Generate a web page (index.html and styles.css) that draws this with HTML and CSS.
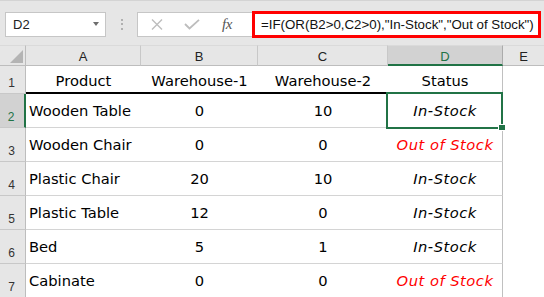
FILE: index.html
```html
<!DOCTYPE html>
<html>
<head>
<meta charset="utf-8">
<link rel="stylesheet" href="styles.css">
</head>
<body>
<div class="toolbar">
  <div class="namebox">
    <span class="name">D2</span>
    <span class="caret"></span>
  </div>
  <div class="dots"><i></i><i></i><i></i></div>
  <div class="buttons">
    <svg class="btn-x" width="12" height="11" viewBox="0 0 12 11"><path d="M1 0.5 L11 10.5 M11 0.5 L1 10.5" stroke="#bdbdbd" stroke-width="1.4" fill="none"/></svg>
    <svg class="btn-ok" width="16" height="11" viewBox="0 0 16 11"><path d="M1 5 L5.5 9.5 L15 0.8" stroke="#bdbdbd" stroke-width="1.8" fill="none"/></svg>
    <span class="fx">fx</span>
  </div>
  <div class="formula">=IF(OR(B2&gt;0,C2&gt;0),"In-Stock","Out of Stock")</div>
</div>
<div class="sheet">
  <div class="grid">
    <div class="corner"><span class="tri"></span></div>
    <div class="ch">A</div>
    <div class="ch">B</div>
    <div class="ch">C</div>
    <div class="ch ch-sel">D</div>
    <div class="ch ch-last">E</div>

    <div class="rh">1</div>
    <div class="c hdr">Product</div>
    <div class="c hdr">Warehouse-1</div>
    <div class="c hdr">Warehouse-2</div>
    <div class="c hdr d">Status</div>
    <div class="e"></div>

    <div class="rh rh-sel">2</div>
    <div class="c left">Wooden Table</div>
    <div class="c">0</div>
    <div class="c">10</div>
    <div class="c d st">In-Stock</div>
    <div class="e"></div>

    <div class="rh">3</div>
    <div class="c left">Wooden Chair</div>
    <div class="c">0</div>
    <div class="c">0</div>
    <div class="c d st out">Out of Stock</div>
    <div class="e"></div>

    <div class="rh">4</div>
    <div class="c left">Plastic Chair</div>
    <div class="c">20</div>
    <div class="c">10</div>
    <div class="c d st">In-Stock</div>
    <div class="e"></div>

    <div class="rh">5</div>
    <div class="c left">Plastic Table</div>
    <div class="c">12</div>
    <div class="c">0</div>
    <div class="c d st">In-Stock</div>
    <div class="e"></div>

    <div class="rh">6</div>
    <div class="c left">Bed</div>
    <div class="c">5</div>
    <div class="c">1</div>
    <div class="c d st">In-Stock</div>
    <div class="e"></div>

    <div class="rh">7</div>
    <div class="c left">Cabinate</div>
    <div class="c">0</div>
    <div class="c">0</div>
    <div class="c d st out">Out of Stock</div>
    <div class="e"></div>
  </div>
  <div class="selection"></div>
  <div class="handle"></div>
</div>
</body>
</html>
```
FILE: styles.css
```css
* { box-sizing: border-box; }
html, body { margin: 0; padding: 0; }
body {
  width: 544px;
  height: 297px;
  overflow: hidden;
  background: #fff;
  font-family: "Liberation Sans", Arial, sans-serif;
}

.toolbar {
  height: 45px;
  background: #e6e6e6;
  border-top: 1px solid #d4d4d4;
  display: flex;
  align-items: center;
  padding-left: 5px;
  padding-top: 2px;
}

.namebox {
  width: 101px;
  height: 25px;
  background: #fff;
  border: 1px solid #c6c6c6;
  display: flex;
  align-items: center;
  justify-content: space-between;
  padding: 0 6px 0 7px;
}
.name { font-size: 13px; color: #222; }
.caret {
  width: 0; height: 0;
  border-left: 3.5px solid transparent;
  border-right: 3.5px solid transparent;
  border-top: 4px solid #6d6d6d;
}

.dots {
  width: 31px;
  height: 25px;
  display: flex;
  flex-direction: column;
  align-items: center;
  justify-content: center;
  gap: 2.5px;
}
.dots i {
  display: block;
  width: 2px;
  height: 2px;
  background: #b0b0b0;
}

.buttons {
  width: 115px;
  height: 25px;
  background: #fff;
  border: 1px solid #c6c6c6;
  border-right: none;
  display: flex;
  align-items: center;
  padding-left: 13px;
}
.btn-x { margin-right: 21px; }
.btn-ok { margin-right: 22px; }
.fx {
  font-family: "Liberation Serif", "Times New Roman", serif;
  font-style: italic;
  font-size: 15px;
  color: #555;
  letter-spacing: -0.5px;
}

.formula {
  width: 289px;
  height: 27px;
  border: 3px solid #ff0000;
  background: #fff;
  font-size: 13.3px;
  color: #111;
  display: flex;
  align-items: center;
  padding-left: 6px;
  white-space: nowrap;
  overflow: hidden;
}

.sheet { position: relative; }

.grid {
  display: grid;
  grid-template-columns: 26px 115px 117px 130px 115px 41px;
  grid-template-rows: 21px 28px repeat(6, 34px);
}

.corner {
  background: #e6e6e6;
  border-right: 1px solid #bdbdbd;
  border-bottom: 1px solid #bdbdbd;
  border-top: 1px solid #dadada;
  position: relative;
}
.tri {
  position: absolute;
  right: 2px;
  bottom: 2px;
  width: 13px;
  height: 13px;
  background: #b4b4b4;
  clip-path: polygon(100% 0, 100% 100%, 0 100%);
}

.ch {
  background: #e6e6e6;
  border-top: 1px solid #dadada;
  border-right: 1px solid #c8c8c8;
  border-bottom: 1px solid #bdbdbd;
  font-size: 13px;
  color: #222;
  text-align: center;
  line-height: 19px;
  padding-top: 1px;
}
.ch-sel {
  background: #d2d2d2;
  color: #217346;
  border-right-color: #ababab;
  border-bottom: 2px solid #217346;
}
.ch-last { border-right: none; }

.rh {
  background: #e6e6e6;
  border-right: 1px solid #bdbdbd;
  border-bottom: 1px solid #c8c8c8;
  font-size: 12px;
  color: #333;
  display: flex;
  align-items: flex-end;
  justify-content: center;
  padding-bottom: 3px;
  padding-right: 2px;
  line-height: 14px;
}
.rh-sel {
  background: #d2d2d2;
  color: #217346;
  border-right: 2px solid #217346;
}

.c {
  font-family: "DejaVu Sans", Verdana, sans-serif;
  font-size: 14.7px;
  line-height: 17px;
  color: #000;
  border-bottom: 1px solid #d4d4d4;
  display: flex;
  align-items: center;
  justify-content: center;
  white-space: nowrap;
}
.c.left { justify-content: flex-start; padding-left: 3px; }
.c.hdr { border-bottom: 2px solid #000; padding-top: 3px; }
.c.d { border-right: 1px solid #c0c0c0; }
.c.st { font-style: italic; letter-spacing: 0.5px; }
.c.out { color: #ff0000; }

.e { background: #fff; }

.selection {
  position: absolute;
  left: 386px;
  top: 47px;
  width: 117px;
  height: 37px;
  border: 2px solid #217346;
  pointer-events: none;
}
.handle {
  position: absolute;
  left: 498px;
  top: 79px;
  width: 8px;
  height: 7px;
  background: #217346;
  border: 1px solid #fff;
}
```
